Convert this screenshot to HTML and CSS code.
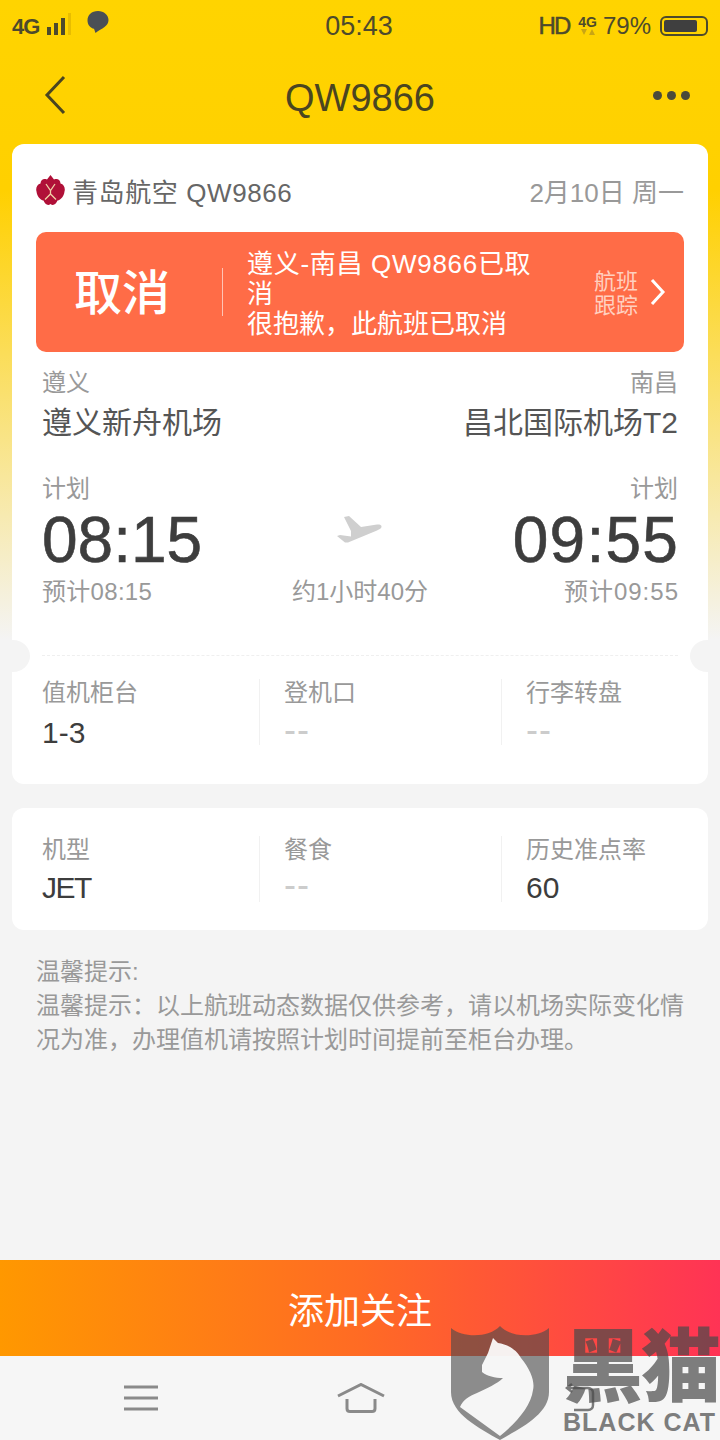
FILE: index.html
```html
<!DOCTYPE html>
<html lang="zh">
<head>
<meta charset="utf-8">
<title>QW9866</title>
<link rel="stylesheet" href="styles.css">
</head>
<body>
<div class="page">
  <div class="status">
    <div class="status-left">
      <span class="st-4g">4G</span>
      <svg class="st-signal" width="26" height="24" viewBox="0 0 26 24"><rect x="1" y="14" width="4" height="8" fill="#4d4a2c"/><rect x="8" y="10" width="4" height="12" fill="#4d4a2c"/><rect x="15" y="5" width="4" height="17" fill="#4d4a2c"/><rect x="22" y="0" width="3" height="22" fill="#e8bd00"/></svg>
      <svg class="st-msg" width="24" height="24" viewBox="0 0 24 24"><path d="M12 1C5.500 1 1.500 5 1.500 10.500C1.500 15 4.500 18 8 18.800L9.500 23C12.500 20.500 16 19 18.500 17C21 15 22.500 13 22.500 10C22.500 5 18 1 12 1Z" fill="#4a4f55"/></svg>
    </div>
    <div class="status-time">05:43</div>
    <div class="status-right">
      <span class="st-hd">HD</span>
      <span class="st-net"><span class="st-net-t">4G</span><svg width="14" height="6" viewBox="0 0 14 6"><path d="M0 0H6L3 6ZM11 0L14 6H8Z" fill="#c9a514"/></svg></span>
      <span class="st-pct">79%</span>
      <span class="st-batt"><span class="st-batt-fill"></span></span>
    </div>
  </div>
  <div class="nav">
    <svg class="nav-back" width="22" height="40" viewBox="0 0 22 40"><path d="M20 2L3 20L20 38" fill="none" stroke="#4a4520" stroke-width="3"/></svg>
    <div class="nav-title">QW9866</div>
    <div class="nav-more"><i></i><i></i><i></i></div>
  </div>

  <main class="content">
    <section class="card main-card">
      <div class="head">
        <div class="airline">
          <svg class="logo" width="29" height="31" viewBox="0 0 29 31"><path d="M14.500 0L18 4.500C21.500 3 24.500 5 24.500 8.500C28 9.500 29.500 13 28.500 16.500C28 21 25 25 21.500 25.500C20 29.500 17 31 14.500 29C12 31 9 29.500 7.500 25.500C4 25 1 21 .5 16.500C-.5 13 1 9.500 4.500 8.500C4.500 5 7.500 3 11 4.500Z" fill="#b01038"/><path d="M10 9L14.500 15.500L19 9M14.500 15.500V19M9 24.500L14.500 19L20 24.500" fill="none" stroke="#efcfa6" stroke-width="1.300"/></svg>
          <span>青岛航空 QW9866</span>
        </div>
        <div class="date">2月10日 周一</div>
      </div>

      <div class="alert">
        <div class="alert-state">取消</div>
        <div class="alert-rule"></div>
        <div class="alert-msg">
          <div class="alert-line1">遵义-南昌 QW9866已取消</div>
          <div>很抱歉，此航班已取消</div>
        </div>
        <div class="alert-track">
          <span class="track-label">航班<br>跟踪</span>
          <svg width="16" height="28" viewBox="0 0 16 28"><path d="M2 2L13 14L2 26" fill="none" stroke="#fff" stroke-width="3"/></svg>
        </div>
      </div>

      <div class="route">
        <div class="col">
          <div class="city">遵义</div>
          <div class="airport">遵义新舟机场</div>
        </div>
        <div class="col end">
          <div class="city">南昌</div>
          <div class="airport">昌北国际机场T2</div>
        </div>
      </div>

      <div class="times">
        <div class="col">
          <div class="city">计划</div>
          <div class="time">08:15</div>
          <div class="expect">预计08:15</div>
        </div>
        <div class="mid">
          <svg width="46" height="28" viewBox="0 0 46 28"><path d="M7 1L12 0L24 11L40 8.500C44 8 45.500 10 44 12C43 13 42 13.500 40 14.500L11 26.500L8 26.500L0 20L3 19L14 20.500L14 15Z" fill="#cfcfcf"/></svg>
          <div class="duration">约1小时40分</div>
        </div>
        <div class="col end">
          <div class="city">计划</div>
          <div class="time wide">09:55</div>
          <div class="expect wide">预计09:55</div>
        </div>
      </div>

      <div class="tear"></div>

      <div class="info-row">
        <div class="info"><div class="info-k">值机柜台</div><div class="info-v">1-3</div></div>
        <div class="info"><div class="info-k">登机口</div><div class="info-v empty">--</div></div>
        <div class="info"><div class="info-k">行李转盘</div><div class="info-v empty">--</div></div>
      </div>
    </section>

    <section class="card sub-card">
      <div class="info-row">
        <div class="info"><div class="info-k">机型</div><div class="info-v tight">JET</div></div>
        <div class="info"><div class="info-k">餐食</div><div class="info-v empty">--</div></div>
        <div class="info"><div class="info-k">历史准点率</div><div class="info-v">60</div></div>
      </div>
    </section>

    <p class="tips">温馨提示:<br>温馨提示：以上航班动态数据仅供参考，请以机场实际变化情况为准，办理值机请按照计划时间提前至柜台办理。</p>
  </main>

  <button class="follow">添加关注</button>

  <div class="softkeys">
    <svg width="34" height="26" viewBox="0 0 34 26"><path d="M0 2H34M0 13H34M0 24H34" stroke="#8a8a8a" stroke-width="3"/></svg>
    <svg width="48" height="30" viewBox="0 0 48 30"><path d="M1 13L24 1.500L47 13M10 16V25.500C10 27.500 11 28.500 13 28.500H35C37 28.500 38 27.500 38 25.500V16" fill="none" stroke="#8a8a8a" stroke-width="3"/></svg>
    <svg width="32" height="30" viewBox="0 0 32 30"><path d="M3 5H24C27 5 29 7 29 10V22C29 25 27 27 24 27H10M8 1L3 5L8 9" fill="none" stroke="#7a7a7a" stroke-width="2.500"/></svg>
  </div>

  <div class="watermark">
    <svg class="wm-shield" width="98" height="114" viewBox="0 0 98 114"><path d="M0 2C12 12 38 12 49 0C60 12 86 12 98 2V66C98 88 70 102 49 114C28 102 0 88 0 66Z" fill="#4a4a4a" fill-opacity=".62"/><path d="M42 12L47 17C56 18 66 24 70 32C80 44 84 56 82 64C80 80 66 96 49 110L9 81C12 74 18 70 26 67C36 62 46 58 52 52C44 52 36 50 31 46L31 39L37 27Z" fill="#fff" fill-opacity=".92"/></svg>
    <div class="wm-text">
      <div class="wm-cn">黑猫</div>
      <div class="wm-en">BLACK CAT</div>
    </div>
  </div>
</div>
</body>
</html>
```

FILE: styles.css
```css
* { box-sizing: border-box; }
html, body { margin: 0; padding: 0; }
body { font-family: "Liberation Sans", "Noto Sans CJK SC", sans-serif; }
.page {
  position: relative;
  width: 720px;
  height: 1440px;
  overflow: hidden;
  display: flex;
  flex-direction: column;
  background: linear-gradient(180deg, #ffd400 0, #ffd000 190px, #f4f4f4 640px, #f4f4f4 100%);
}
.status {
  height: 52px;
  flex: none;
  display: grid;
  grid-template-columns: 1fr auto 1fr;
  align-items: center;
  padding: 0 12px;
  color: #4d4a2c;
}
.status-left { display: flex; align-items: center; gap: 7px; }
.st-4g { font-size: 22px; font-weight: 700; letter-spacing: -1px; margin-top: 2px; }
.st-signal { margin-top: -2px; }
.st-msg { margin: -8px 0 0 7px; }
.status-time { font-size: 27px; margin: 1px 2px 0 0; }
.status-right { display: flex; align-items: center; justify-content: flex-end; gap: 5px; }
.st-hd { font-size: 24px; letter-spacing: -2px; -webkit-text-stroke: .5px #4d4a2c; margin-right: 4px; }
.st-net { display: flex; flex-direction: column; align-items: center; line-height: 1; margin-top: -3px; }
.st-net-t { font-size: 14px; font-weight: 700; height: 14px; }
.st-pct { font-size: 24px; margin-left: 1px; }
.st-batt {
  position: relative;
  width: 48px;
  height: 20px;
  margin-left: 4px;
  border: 2px solid #4d4a2c;
  border-radius: 6px;
  padding: 2px;
}
.st-batt-fill { display: block; width: 33px; height: 12px; background: #3f3f3f; border-radius: 2px; }
.nav {
  height: 92px;
  flex: none;
  display: flex;
  align-items: center;
  justify-content: space-between;
  padding: 0 30px 0 44px;
  position: relative;
}
.nav-back { margin-top: -6px; }
.nav-title {
  position: absolute;
  left: 0;
  right: 0;
  text-align: center;
  font-size: 38px;
  color: #4a4520;
  line-height: 92px;
}
.nav-more { display: flex; gap: 5px; margin-top: -5px; }
.nav-more i { width: 9px; height: 9px; border-radius: 50%; background: #4a4a3a; }
.content { flex: 1; padding: 0 12px; display: flex; flex-direction: column; min-height: 0; }
.card { background: #fff; border-radius: 12px; position: relative; }
.main-card { height: 640px; padding: 0 24px; overflow: hidden; }
.head { display: flex; align-items: center; justify-content: space-between; height: 88px; padding-top: 4px; }
.airline { display: flex; align-items: center; gap: 7px; font-size: 26px; color: #666; letter-spacing: .6px; }
.date { font-size: 26px; color: #999; }
.alert {
  height: 120px;
  border-radius: 10px;
  background: #ff6c47;
  color: #fff;
  display: flex;
  align-items: center;
}
.alert-state { width: 170px; padding: 4px 0 0 2px; flex: none; text-align: center; font-size: 48px; font-weight: 500; line-height: 1; }
.alert-rule { width: 1px; height: 48px; margin-left: 16px; background: rgba(255,255,255,.6); flex: none; }
.alert-msg { width: 300px; margin: 4px 0 0 24px; flex: none; font-size: 26px; line-height: 30px; }
.alert-line1 { letter-spacing: .7px; }
.alert-track { display: flex; align-items: center; gap: 12px; margin-left: auto; padding-right: 18px; font-size: 22px; line-height: 24px; color: #ffd0c0; }
.track-label { margin-top: 4px; }
.route, .times { display: flex; justify-content: space-between; padding: 0 6px; }
.route { margin-top: 16px; }
.times { margin-top: 30px; }
.col { display: flex; flex-direction: column; }
.col.end { align-items: flex-end; }
.city { font-size: 24px; line-height: 30px; color: #999; }
.airport { font-size: 30px; line-height: 42px; color: #555; margin-top: 4px; }
.time { font-size: 64px; line-height: 72px; color: #3d3d3d; -webkit-text-stroke: .6px #3d3d3d; }
.time.wide { letter-spacing: 1.200px; margin-right: -1px; }
.expect { font-size: 24px; line-height: 30px; color: #999; margin-top: 1px; letter-spacing: .3px; }
.expect.wide { letter-spacing: 1px; margin-right: -1px; }
.mid { display: flex; flex-direction: column; align-items: center; padding-top: 42px; margin-left: 5px; }
.duration { font-size: 24px; line-height: 30px; color: #999; margin-top: 33px; }
.tear { margin: 48px 6px 0; border-top: 1px dashed #efefef; position: relative; }
.main-card::before, .main-card::after {
  content: "";
  position: absolute;
  top: 496px;
  width: 34px;
  height: 32px;
  border-radius: 50%;
  background: #f4f4f4;
}
.main-card::before { left: -16px; }
.main-card::after { right: -16px; }
.info-row { display: grid; grid-template-columns: 247px 242px 1fr; }
.main-card .info-row { margin: 23px -24px 0; }
.sub-card { margin-top: 24px; height: 122px; padding-top: 28px; }
.info { padding-left: 30px; height: 66px; border-left: 1px solid #f1f1f1; }
.info:first-child { border-left: 0; }
.info + .info { padding-left: 24px; }
.info-k { font-size: 24px; line-height: 28px; color: #999; }
.info-v { font-size: 30px; line-height: 36px; color: #3d3d3d; margin-top: 6px; }
.main-card .info-v { margin-top: 8px; }
.info-v.tight { letter-spacing: -1.500px; }
.info-v.empty { color: #ccc; font-size: 36px; line-height: 30px; letter-spacing: 1px; }
.tips { margin: 25px 24px 0; font-size: 24px; line-height: 34px; color: #999; }
.follow {
  flex: none;
  height: 96px;
  border: 0;
  padding: 0;
  font: inherit;
  font-size: 36px;
  color: #fff;
  background: linear-gradient(90deg, #ff9800 0, #ff6b24 50%, #ff3355 100%);
}
.softkeys {
  flex: none;
  height: 84px;
  background: #f6f6f6;
  display: flex;
  align-items: center;
  gap: 179px;
  padding: 0 0 0 124px;
}
.watermark { position: absolute; left: 451px; top: 1326px; display: flex; gap: 14px; color: #4a4a4a; }
.wm-text { display: flex; flex-direction: column; align-items: flex-start; opacity: .7; }
.wm-cn { font-size: 80px; line-height: 76px; font-weight: 900; margin-top: 4px; letter-spacing: -2px; }
.wm-en { font-size: 25px; line-height: 26px; font-weight: 700; letter-spacing: 1px; margin-top: 3px; }
```
